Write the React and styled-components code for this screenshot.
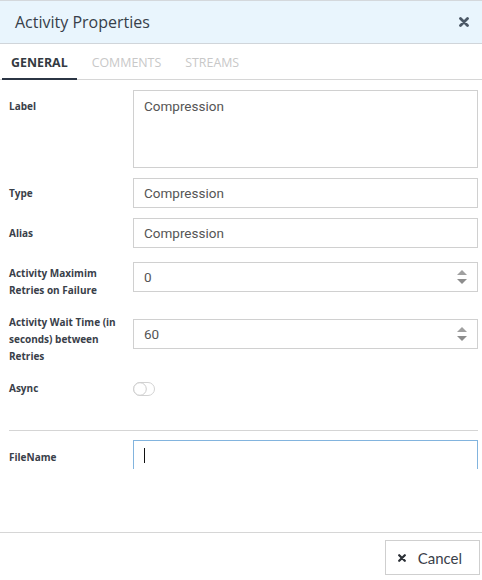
import React from 'react';
import styled, { createGlobalStyle } from 'styled-components';

const GlobalStyle = createGlobalStyle`
  html, body {
    margin: 0;
    padding: 0;
    background: #fff;
  }
  * {
    box-sizing: border-box;
  }
  svg {
    display: block;
  }
`;

const Modal = styled.div`
  width: 482px;
  height: 580px;
  display: flex;
  flex-direction: column;
  background: #fff;
  font-family: 'Open Sans', sans-serif;
  overflow: hidden;
`;

const Header = styled.div`
  height: 44px;
  flex: none;
  display: flex;
  align-items: center;
  justify-content: space-between;
  padding: 0 13px 0 15px;
  background: #e9f5fd;
  border-top: 1px solid #d4d8dc;
  border-bottom: 1px solid #d0d5da;
`;

const Title = styled.h4`
  margin: 0;
  font-size: 16px;
  font-weight: 400;
  color: #37404a;
`;

const CloseButton = styled.button`
  border: 0;
  padding: 0;
  background: none;
  display: flex;
  cursor: pointer;
`;

const TabBar = styled.div`
  height: 36px;
  flex: none;
  display: flex;
  gap: 6px;
  padding-left: 2px;
  border-bottom: 1px solid #d6d6d6;
`;

const Tab = styled.div`
  padding: 2px 9px 0;
  display: flex;
  align-items: center;
  font-size: 12.4px;
  font-weight: ${({ $active }) => ($active ? 700 : 400)};
  color: ${({ $active }) => ($active ? '#333a42' : '#c8c8c8')};
  border-bottom: 2px solid ${({ $active }) => ($active ? '#2b3544' : 'transparent')};
  margin-bottom: -1px;
`;

const Content = styled.div`
  flex: 1;
`;

const Body = styled.div`
  height: 389px;
  overflow: hidden;
  padding: 10px 4px 0 9px;
`;

const Row = styled.div`
  display: flex;
  align-items: flex-start;
  margin-top: ${({ $mt = 0 }) => $mt}px;
`;

const Label = styled.label`
  width: 124px;
  flex: none;
  padding-top: ${({ $pt = 0 }) => $pt}px;
  padding-right: 8px;
  font-size: 10px;
  font-weight: 700;
  line-height: 17px;
  color: #394049;
`;

const Field = styled.div`
  flex: 1;
  margin-top: ${({ $ft = 0 }) => $ft}px;
`;

const TextArea = styled.div`
  height: 78px;
  border: 1px solid #d0d0d0;
  padding: 6px 10px;
  font-family: Roboto, 'Liberation Sans', sans-serif;
  font-size: 13.5px;
  line-height: 18px;
  color: #555;
`;

const Input = styled.div`
  height: 30px;
  display: flex;
  align-items: center;
  justify-content: space-between;
  border: 1px solid ${({ $focused }) => ($focused ? '#82b4de' : '#d0d0d0')};
  padding: 0 10px;
  font-family: Roboto, 'Liberation Sans', sans-serif;
  font-size: 13.5px;
  color: #555;
`;

const Caret = styled.span`
  width: 1px;
  height: 15px;
  background: #111;
`;

const Spinner = styled.div`
  display: flex;
  flex-direction: column;
  gap: 4px;
`;

const Arrow = styled.span`
  width: 0;
  height: 0;
  border-left: 5px solid transparent;
  border-right: 5px solid transparent;
  ${({ $down }) =>
    $down ? 'border-top: 5px solid #8d8d8d;' : 'border-bottom: 5px solid #a0a0a0;'}
`;

const Divider = styled.hr`
  margin: 33px 0 0;
  border: 0;
  border-top: 1px solid #d5d5d5;
`;

const Footer = styled.div`
  flex: none;
  display: flex;
  justify-content: flex-end;
  padding: 7px 2px 5px 0;
  border-top: 1px solid #d6d6d6;
`;

const CancelButton = styled.button`
  height: 35px;
  display: flex;
  align-items: center;
  gap: 12px;
  padding: 0 17px 0 12px;
  background: #fff;
  border: 1px solid #cfcfcf;
  font-family: Lato, 'Open Sans', sans-serif;
  font-size: 15px;
  color: #3a4049;
  cursor: pointer;
`;

const TimesIcon = ({ size = 10, color = '#4b5866' }) => (
  <svg width={size} height={size} viewBox="0 0 10 10">
    <path d="M1.5 1.5 L8.5 8.5 M8.5 1.5 L1.5 8.5" stroke={color} strokeWidth="2.8" strokeLinecap="round" />
  </svg>
);

const Toggle = () => (
  <svg width="22" height="14" viewBox="0 0 22 14">
    <rect x="0.5" y="0.5" width="21" height="13" rx="6.5" fill="#fff" stroke="#d2d2d2" />
    <circle cx="7" cy="7" r="6.3" fill="#fff" stroke="#cdcdcd" />
  </svg>
);

const NumberInput = ({ value }) => (
  <Input>
    <span>{value}</span>
    <Spinner>
      <Arrow />
      <Arrow $down />
    </Spinner>
  </Input>
);

const App = () => (
  <>
    <GlobalStyle />
    <Modal>
      <Header>
        <Title>Activity Properties</Title>
        <CloseButton aria-label="Close">
          <TimesIcon />
        </CloseButton>
      </Header>

      <TabBar>
        <Tab $active>GENERAL</Tab>
        <Tab>COMMENTS</Tab>
        <Tab>STREAMS</Tab>
      </TabBar>

      <Content>
        <Body>
          <Row>
            <Label $pt={8}>Label</Label>
            <Field>
              <TextArea>Compression</TextArea>
            </Field>
          </Row>

          <Row $mt={10}>
            <Label $pt={7}>Type</Label>
            <Field>
              <Input>Compression</Input>
            </Field>
          </Row>

          <Row $mt={10}>
            <Label $pt={7}>Alias</Label>
            <Field>
              <Input>Compression</Input>
            </Field>
          </Row>

          <Row $mt={14}>
            <Label $pt={3}>Activity Maximim Retries on Failure</Label>
            <Field>
              <NumberInput value="0" />
            </Field>
          </Row>

          <Row $mt={15}>
            <Label>Activity Wait Time (in seconds) between Retries</Label>
            <Field $ft={5}>
              <NumberInput value="60" />
            </Field>
          </Row>

          <Row $mt={15}>
            <Label>Async</Label>
            <Field $ft={2}>
              <Toggle />
            </Field>
          </Row>

          <Divider />

          <Row $mt={9}>
            <Label $pt={9}>FileName</Label>
            <Field>
              <Input $focused>
                <Caret />
              </Input>
            </Field>
          </Row>
        </Body>
      </Content>

      <Footer>
        <CancelButton>
          <TimesIcon size={8} color="#2b2f36" />
          Cancel
        </CancelButton>
      </Footer>
    </Modal>
  </>
);

export default App;
